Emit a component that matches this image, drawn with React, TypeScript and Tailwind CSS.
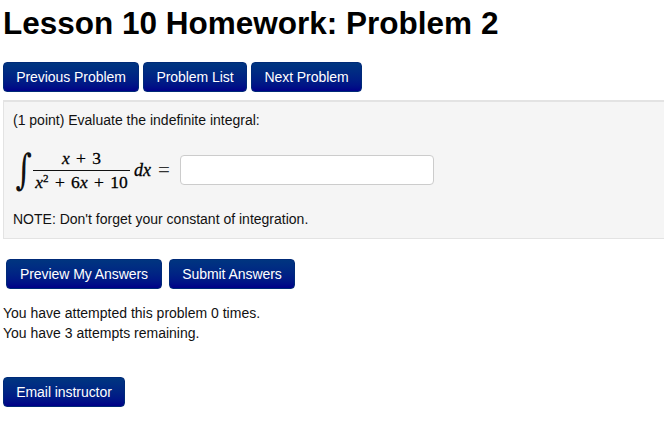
export default function App() {
  const btn = "h-[30px] rounded-[4px] border border-[#002a78] bg-gradient-to-b from-[#003580] to-[#000088] text-white text-[14px] leading-[20px] tracking-[-0.06px] whitespace-nowrap text-center";
  const math = { fontFamily: '"Liberation Serif", serif' };
  return (
    <div className="w-[664px] h-[426px] overflow-hidden bg-white text-[14px] leading-[20px] text-[#111] pl-[3px]" style={{ fontFamily: '"Liberation Sans", Arial, sans-serif' }}>
      <h1 className="text-[31.5px] leading-[38px] font-bold text-black pt-[4px] h-[62px] whitespace-nowrap">Lesson 10 Homework: Problem 2</h1>
      <div className="flex gap-[4px]">
        <button className={`${btn} w-[136px]`}>Previous Problem</button>
        <button className={`${btn} w-[104px]`}>Problem List</button>
        <button className={`${btn} w-[111px]`}>Next Problem</button>
      </div>
      <div className="mt-[8px] w-[670px] h-[139px] border border-[#e3e3e3] border-t-2 bg-[#f5f5f5] pl-[9px] pt-[8px]">
        <div className="h-[20px]">(1 point) Evaluate the indefinite integral:</div>
        <div className="flex items-center mt-[15px] h-[50px]" style={math}>
          <span className="text-[42px] italic font-normal leading-none w-[20px] text-center shrink-0 scale-x-75 [font-family:'DejaVu_Serif',serif]">∫</span>
          <div className="flex flex-col items-center w-[97px] text-[17.5px] leading-[21px] font-normal text-black [-webkit-text-stroke:0.3px_#000]">
            <span className="border-b border-[#111] w-full text-center pb-[1px] [word-spacing:2px]"><i>x</i> + 3</span>
            <span className="pt-[1px] whitespace-nowrap [word-spacing:2px]"><i>x</i><sup className="text-[11px]">2</sup> + 6<i>x</i> + 10</span>
          </div>
          <span className="text-[18px] ml-[4px] w-[21px] shrink-0 text-black [-webkit-text-stroke:0.3px_#000]"><i>dx</i></span>
          <span className="text-[21px] ml-[3px] w-[22px] shrink-0 text-[#333]">=</span>
          <input className="w-[254px] h-[30px] bg-white border border-[#ccc] rounded-[4px] shrink-0" />
        </div>
        <div className="mt-[14px]">NOTE: Don't forget your constant of integration.</div>
      </div>
      <div className="flex gap-[7px] mt-[20px] ml-[3px]">
        <button className={`${btn} w-[156px]`}>Preview My Answers</button>
        <button className={`${btn} w-[126px]`}>Submit Answers</button>
      </div>
      <div className="mt-[14px]">You have attempted this problem 0 times.</div>
      <div>You have 3 attempts remaining.</div>
      <button className={`${btn} w-[122px] mt-[34px]`}>Email instructor</button>
    </div>
  );
}
